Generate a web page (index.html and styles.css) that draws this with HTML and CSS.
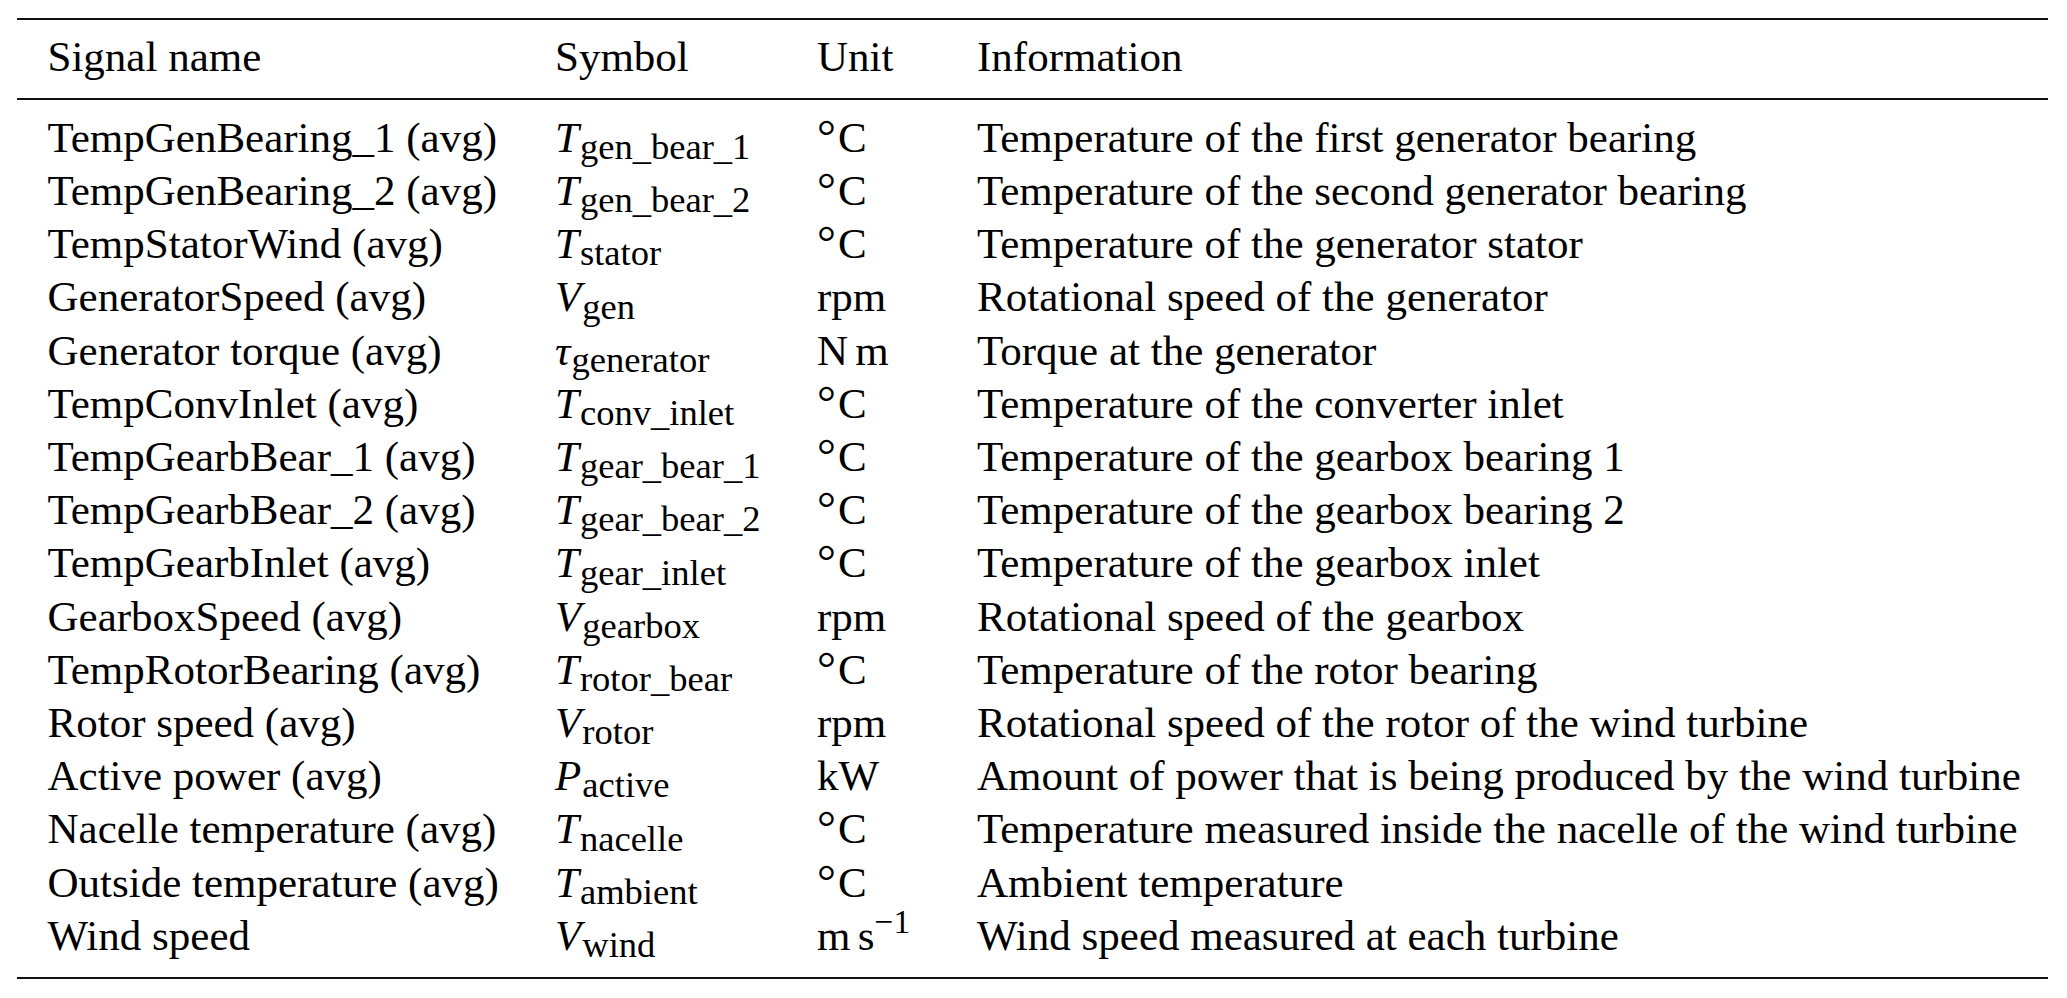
FILE: index.html
```html
<!DOCTYPE html>
<html lang="en">
<head>
<meta charset="utf-8">
<title>Signals</title>
<link rel="stylesheet" href="styles.css">
</head>
<body>
<table class="signals">
  <colgroup>
    <col class="c-name"><col class="c-sym"><col class="c-unit"><col class="c-info">
  </colgroup>
  <thead>
    <tr><th class="name">Signal name</th><th>Symbol</th><th>Unit</th><th>Information</th></tr>
  </thead>
  <tbody>
    <tr><td class="name">TempGenBearing_1 (avg)</td><td><i>T</i><sub>gen_bear_1</sub></td><td><span class="deg">°</span>C</td><td>Temperature of the first generator bearing</td></tr>
    <tr><td class="name">TempGenBearing_2 (avg)</td><td><i>T</i><sub>gen_bear_2</sub></td><td><span class="deg">°</span>C</td><td>Temperature of the second generator bearing</td></tr>
    <tr><td class="name">TempStatorWind (avg)</td><td><i>T</i><sub>stator</sub></td><td><span class="deg">°</span>C</td><td>Temperature of the generator stator</td></tr>
    <tr><td class="name">GeneratorSpeed (avg)</td><td><i>V</i><sub>gen</sub></td><td>rpm</td><td>Rotational speed of the generator</td></tr>
    <tr><td class="name">Generator torque (avg)</td><td><i>τ</i><sub>generator</sub></td><td>N<span class="thin"></span>m</td><td>Torque at the generator</td></tr>
    <tr><td class="name">TempConvInlet (avg)</td><td><i>T</i><sub>conv_inlet</sub></td><td><span class="deg">°</span>C</td><td>Temperature of the converter inlet</td></tr>
    <tr><td class="name">TempGearbBear_1 (avg)</td><td><i>T</i><sub>gear_bear_1</sub></td><td><span class="deg">°</span>C</td><td>Temperature of the gearbox bearing 1</td></tr>
    <tr><td class="name">TempGearbBear_2 (avg)</td><td><i>T</i><sub>gear_bear_2</sub></td><td><span class="deg">°</span>C</td><td>Temperature of the gearbox bearing 2</td></tr>
    <tr><td class="name">TempGearbInlet (avg)</td><td><i>T</i><sub>gear_inlet</sub></td><td><span class="deg">°</span>C</td><td>Temperature of the gearbox inlet</td></tr>
    <tr><td class="name">GearboxSpeed (avg)</td><td><i>V</i><sub>gearbox</sub></td><td>rpm</td><td>Rotational speed of the gearbox</td></tr>
    <tr><td class="name">TempRotorBearing (avg)</td><td><i>T</i><sub>rotor_bear</sub></td><td><span class="deg">°</span>C</td><td>Temperature of the rotor bearing</td></tr>
    <tr><td class="name">Rotor speed (avg)</td><td><i>V</i><sub>rotor</sub></td><td>rpm</td><td>Rotational speed of the rotor of the wind turbine</td></tr>
    <tr><td class="name">Active power (avg)</td><td><i>P</i><sub>active</sub></td><td>kW</td><td>Amount of power that is being produced by the wind turbine</td></tr>
    <tr><td class="name">Nacelle temperature (avg)</td><td><i>T</i><sub>nacelle</sub></td><td><span class="deg">°</span>C</td><td>Temperature measured inside the nacelle of the wind turbine</td></tr>
    <tr><td class="name">Outside temperature (avg)</td><td><i>T</i><sub>ambient</sub></td><td><span class="deg">°</span>C</td><td>Ambient temperature</td></tr>
    <tr><td class="name">Wind speed</td><td><i>V</i><sub>wind</sub></td><td>m<span class="thin"></span>s<sup>−1</sup></td><td>Wind speed measured at each turbine</td></tr>
  </tbody>
</table>
</body>
</html>
```
FILE: styles.css
```css
html, body {
  margin: 0;
  padding: 0;
  background: #ffffff;
}

body {
  padding: 18px 0 0 17px;
  font-family: "Liberation Serif", "Times New Roman", serif;
  color: #000000;
}

.signals {
  border-collapse: collapse;
  table-layout: fixed;
  width: 2031px;
  font-size: 43px;
  line-height: 53.2px;
  border-top: 2.5px solid #111111;
  border-bottom: 2.5px solid #111111;
}

.c-name { width: 538px; }
.c-sym  { width: 262px; }
.c-unit { width: 160px; }
.c-info { width: 1071px; }

.signals th,
.signals td {
  padding: 0;
  text-align: left;
  font-weight: normal;
  white-space: nowrap;
  vertical-align: baseline;
}

.signals .name {
  padding-left: 30.5px;
}

.signals thead th {
  padding-top: 10px;
  padding-bottom: 15px;
  border-bottom: 2.5px solid #111111;
}

.signals tbody tr:first-child td {
  padding-top: 10.5px;
}

.signals tbody tr:last-child td {
  padding-bottom: 15.5px;
}

.signals i {
  font-style: italic;
}

.signals sub {
  font-size: 0.85em;
  line-height: 0;
  vertical-align: -0.2em;
  margin-left: 1px;
}

.signals sup {
  font-size: 0.78em;
  line-height: 0;
  vertical-align: 0.5em;
}

.deg {
  font-size: 1.1em;
  line-height: 0;
  margin-right: 2px;
}

.thin {
  display: inline-block;
  width: 0.17em;
}
```
